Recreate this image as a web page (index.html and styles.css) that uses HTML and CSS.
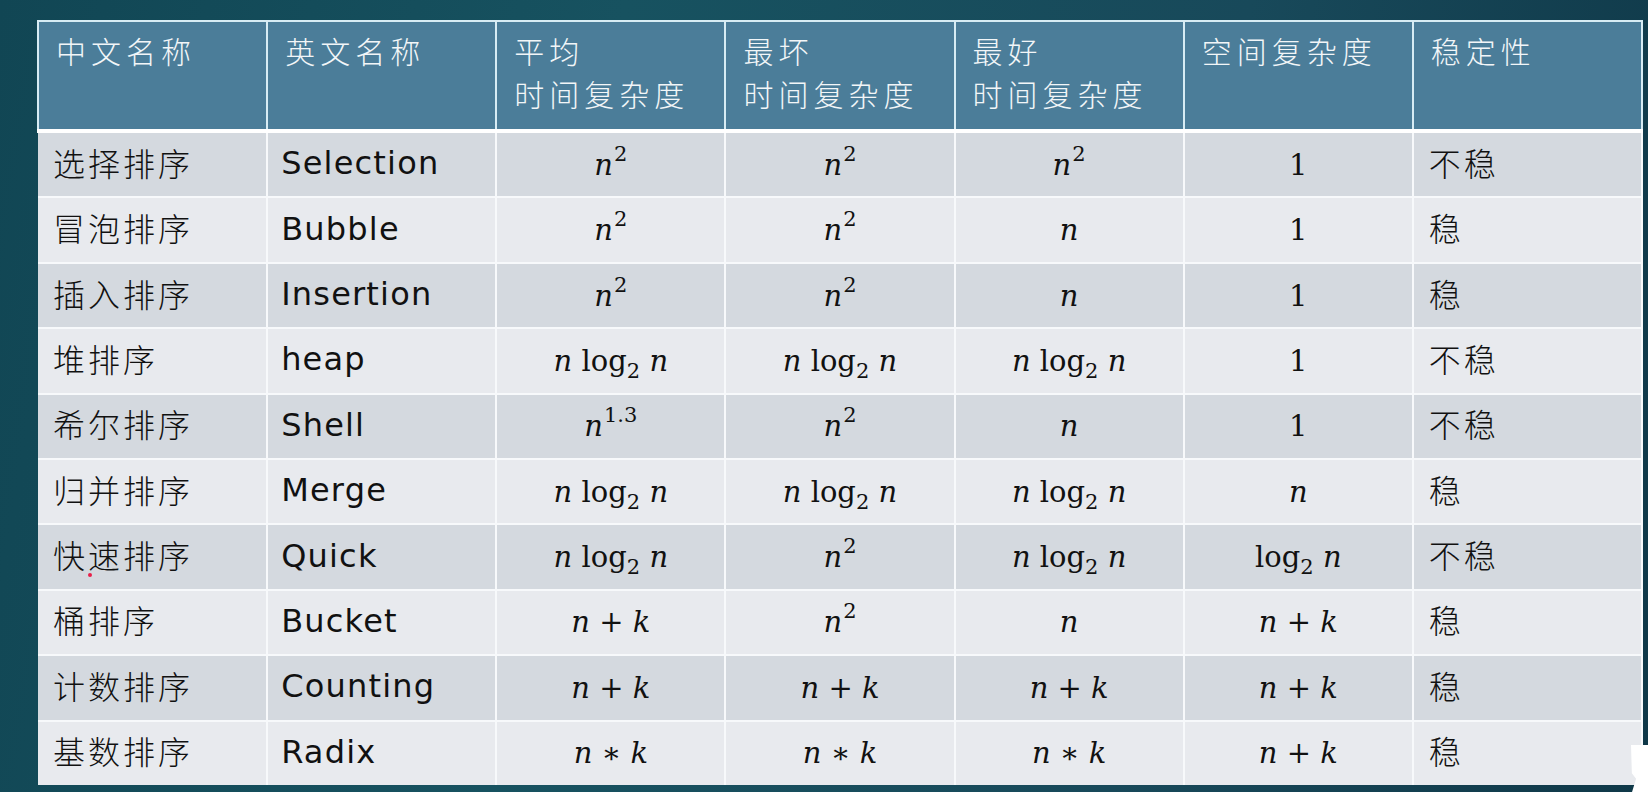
FILE: index.html
```html
<!DOCTYPE html>
<html lang="zh-CN">
<head>
<meta charset="utf-8">
<title>排序算法复杂度</title>
<link rel="stylesheet" href="styles.css">
</head>
<body>
<div class="stage">
  <table class="sort-table">
    <thead>
      <tr>
        <th>中文名称</th>
        <th>英文名称</th>
        <th>平均<br>时间复杂度</th>
        <th>最坏<br>时间复杂度</th>
        <th>最好<br>时间复杂度</th>
        <th>空间复杂度</th>
        <th>稳定性</th>
      </tr>
    </thead>
    <tbody>
      <tr>
        <td class="cn">选择排序</td><td class="en">Selection</td>
        <td class="m"><i>n</i><sup>2</sup></td><td class="m"><i>n</i><sup>2</sup></td><td class="m"><i>n</i><sup>2</sup></td>
        <td class="m">1</td><td class="cn">不稳</td>
      </tr>
      <tr>
        <td class="cn">冒泡排序</td><td class="en">Bubble</td>
        <td class="m"><i>n</i><sup>2</sup></td><td class="m"><i>n</i><sup>2</sup></td><td class="m"><i>n</i></td>
        <td class="m">1</td><td class="cn">稳</td>
      </tr>
      <tr>
        <td class="cn">插入排序</td><td class="en">Insertion</td>
        <td class="m"><i>n</i><sup>2</sup></td><td class="m"><i>n</i><sup>2</sup></td><td class="m"><i>n</i></td>
        <td class="m">1</td><td class="cn">稳</td>
      </tr>
      <tr>
        <td class="cn">堆排序</td><td class="en">heap</td>
        <td class="m"><i>n</i> log<sub>2</sub> <i>n</i></td><td class="m"><i>n</i> log<sub>2</sub> <i>n</i></td><td class="m"><i>n</i> log<sub>2</sub> <i>n</i></td>
        <td class="m">1</td><td class="cn">不稳</td>
      </tr>
      <tr>
        <td class="cn">希尔排序</td><td class="en">Shell</td>
        <td class="m"><i>n</i><sup>1.3</sup></td><td class="m"><i>n</i><sup>2</sup></td><td class="m"><i>n</i></td>
        <td class="m">1</td><td class="cn">不稳</td>
      </tr>
      <tr>
        <td class="cn">归并排序</td><td class="en">Merge</td>
        <td class="m"><i>n</i> log<sub>2</sub> <i>n</i></td><td class="m"><i>n</i> log<sub>2</sub> <i>n</i></td><td class="m"><i>n</i> log<sub>2</sub> <i>n</i></td>
        <td class="m"><i>n</i></td><td class="cn">稳</td>
      </tr>
      <tr>
        <td class="cn dotcell">快速排序<span class="laser"></span></td><td class="en">Quick</td>
        <td class="m"><i>n</i> log<sub>2</sub> <i>n</i></td><td class="m"><i>n</i><sup>2</sup></td><td class="m"><i>n</i> log<sub>2</sub> <i>n</i></td>
        <td class="m">log<sub>2</sub> <i>n</i></td><td class="cn">不稳</td>
      </tr>
      <tr>
        <td class="cn">桶排序</td><td class="en">Bucket</td>
        <td class="m"><i>n</i> + <i>k</i></td><td class="m"><i>n</i><sup>2</sup></td><td class="m"><i>n</i></td>
        <td class="m"><i>n</i> + <i>k</i></td><td class="cn">稳</td>
      </tr>
      <tr>
        <td class="cn">计数排序</td><td class="en">Counting</td>
        <td class="m"><i>n</i> + <i>k</i></td><td class="m"><i>n</i> + <i>k</i></td><td class="m"><i>n</i> + <i>k</i></td>
        <td class="m"><i>n</i> + <i>k</i></td><td class="cn">稳</td>
      </tr>
      <tr>
        <td class="cn">基数排序</td><td class="en">Radix</td>
        <td class="m"><i>n</i> ∗ <i>k</i></td><td class="m"><i>n</i> ∗ <i>k</i></td><td class="m"><i>n</i> ∗ <i>k</i></td>
        <td class="m"><i>n</i> + <i>k</i></td><td class="cn">稳</td>
      </tr>
    </tbody>
  </table>
  <div class="corner-shape"></div>
</div>
</body>
</html>
```

FILE: styles.css
```css
html, body {
  margin: 0;
  padding: 0;
  width: 1648px;
  height: 792px;
  overflow: hidden;
}

body {
  background: linear-gradient(100deg, #114654 0%, #175260 35%, #18495a 70%, #0f3848 100%);
}

.stage {
  position: relative;
  width: 1648px;
  height: 792px;
  padding: 20px 0 0 37px;
  box-sizing: border-box;
}

.sort-table {
  border-collapse: collapse;
  table-layout: fixed;
  width: 1606px;
  height: 765px;
}

.sort-table th {
  background: #4b7d99;
  color: #f2f6f8;
  font-family: "Noto Sans CJK SC", "Noto Sans", sans-serif;
  font-weight: 300;
  font-size: 30px;
  letter-spacing: 5px;
  line-height: 43px;
  text-align: left;
  vertical-align: top;
  padding: 7px 0 0 17px;
  height: 100px;
  border: 2px solid #d7ecf4;
  border-bottom: 4px solid #ffffff;
}

.sort-table td {
  border: 2px solid #f7f9fb;
  height: 61px;
  padding: 0 0 0 15px;
  vertical-align: middle;
  color: #111;
}

.sort-table tbody tr:nth-child(odd) td {
  background: #d4d9df;
}

.sort-table tbody tr:nth-child(even) td {
  background: #e8eaee;
}

.sort-table tbody td:first-child {
  border-left: none;
}

.sort-table tbody tr:last-child td {
  border-bottom: none;
}

.sort-table td.cn {
  height: 55px;
  padding-bottom: 6px;
  font-family: "Noto Sans CJK SC", "Noto Sans", sans-serif;
  font-weight: 300;
  font-size: 32px;
  letter-spacing: 3px;
  line-height: 46px;
}

.sort-table td.en {
  height: 58px;
  padding-left: 13px;
  padding-bottom: 3px;
  font-family: "DejaVu Sans", "Liberation Sans", sans-serif;
  font-size: 32px;
  letter-spacing: 1.2px;
  line-height: 40px;
}

.sort-table td.m {
  padding: 0;
  text-align: center;
  font-family: "DejaVu Serif", "Liberation Serif", serif;
  font-size: 29px;
  line-height: 40px;
  white-space: nowrap;
}

.m i {
  font-style: italic;
}

.m sup {
  font-size: 21px;
  vertical-align: 14px;
  line-height: 0;
  margin-left: 1px;
}

.m sub {
  font-size: 21px;
  vertical-align: -7px;
  line-height: 0;
}

.dotcell {
  position: relative;
}

.laser {
  position: absolute;
  left: 50px;
  top: 48px;
  width: 4px;
  height: 4px;
  border-radius: 50%;
  background: #e8204a;
}

.corner-shape {
  position: absolute;
  right: 0;
  bottom: 0;
  width: 17px;
  height: 47px;
  background: #ffffff;
  clip-path: polygon(0 0, 100% 0, 100% 100%, 6% 100%, 30% 72%, 5% 60%);
}
```
